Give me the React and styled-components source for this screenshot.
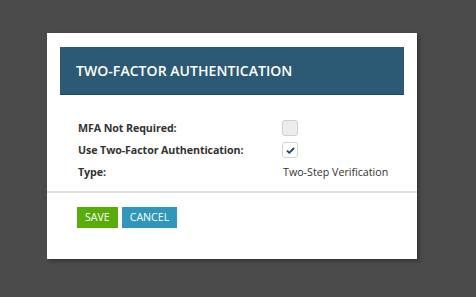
import React from "react";
import styled, { createGlobalStyle } from "styled-components";

const GlobalStyle = createGlobalStyle`
  html, body {
    margin: 0;
    padding: 0;
    background: #4b4b4b;
    font-family: "Open Sans", "Liberation Sans", sans-serif;
  }
`;

const Page = styled.div`
  width: 476px;
  height: 297px;
  padding: 33px 0 0 47px;
  box-sizing: border-box;
`;

const Modal = styled.div`
  width: 370px;
  height: 226px;
  background: #fff;
  box-shadow: 2px 2px 4px rgba(0, 0, 0, 0.35);
  display: flex;
  flex-direction: column;
`;

const Top = styled.div`
  padding: 14px 13px 8px;
`;

const Header = styled.div`
  height: 48px;
  background: #2c5a74;
  border-bottom: 1px solid #24495e;
  box-sizing: border-box;
  display: flex;
  align-items: center;
  padding-left: 16px;
  color: #fff;
  font-size: 14px;
  font-weight: 600;
  letter-spacing: 0.05px;
`;

const Body = styled.div`
  padding: 22px 0 0 18px;
`;

const Row = styled.div`
  display: grid;
  grid-template-columns: 204px 1fr;
  align-items: center;
  height: 22px;
  font-size: 10.7px;
  color: #333;
`;

const Label = styled.span`
  font-weight: 700;
  letter-spacing: -0.1px;
`;

const Value = styled.span`
  padding-left: 1px;
`;

const Box = styled.span`
  width: 16px;
  height: 16px;
  box-sizing: border-box;
  border-radius: 3px;
  border: 1px solid ${(p) => (p.$checked ? "#d4d4d4" : "#cfcfcf")};
  background: ${(p) => (p.$checked ? "#fff" : "#ececec")};
  display: flex;
  align-items: center;
  justify-content: center;
`;

const Footer = styled.div`
  border-top: 2px solid #e0e0e0;
  padding: 14px 30px 0;
  display: flex;
  gap: 4px;
`;

const Button = styled.button`
  height: 21px;
  padding: 0 8px;
  border: none;
  border-radius: 0;
  background: ${(p) => p.$bg};
  color: #fff;
  font-family: inherit;
  font-size: 10.6px;
  line-height: 21px;
  cursor: pointer;
`;

const Check = () => (
  <svg width="9" height="7" viewBox="0 0 9 7">
    <path d="M1 3.6 L3.3 5.8 L8 1" fill="none" stroke="#1f3f6e" strokeWidth="1.8" />
  </svg>
);

export default function App() {
  return (
    <>
      <GlobalStyle />
      <Page>
        <Modal>
          <Top>
            <Header>TWO-FACTOR AUTHENTICATION</Header>
            <Body>
              <Row>
                <Label>MFA Not Required:</Label>
                <Box />
              </Row>
              <Row>
                <Label>Use Two-Factor Authentication:</Label>
                <Box $checked>
                  <Check />
                </Box>
              </Row>
              <Row>
                <Label>Type:</Label>
                <Value>Two-Step Verification</Value>
              </Row>
            </Body>
          </Top>
          <Footer>
            <Button $bg="#5aab0c">SAVE</Button>
            <Button $bg="#2e97bb">CANCEL</Button>
          </Footer>
        </Modal>
      </Page>
    </>
  );
}
